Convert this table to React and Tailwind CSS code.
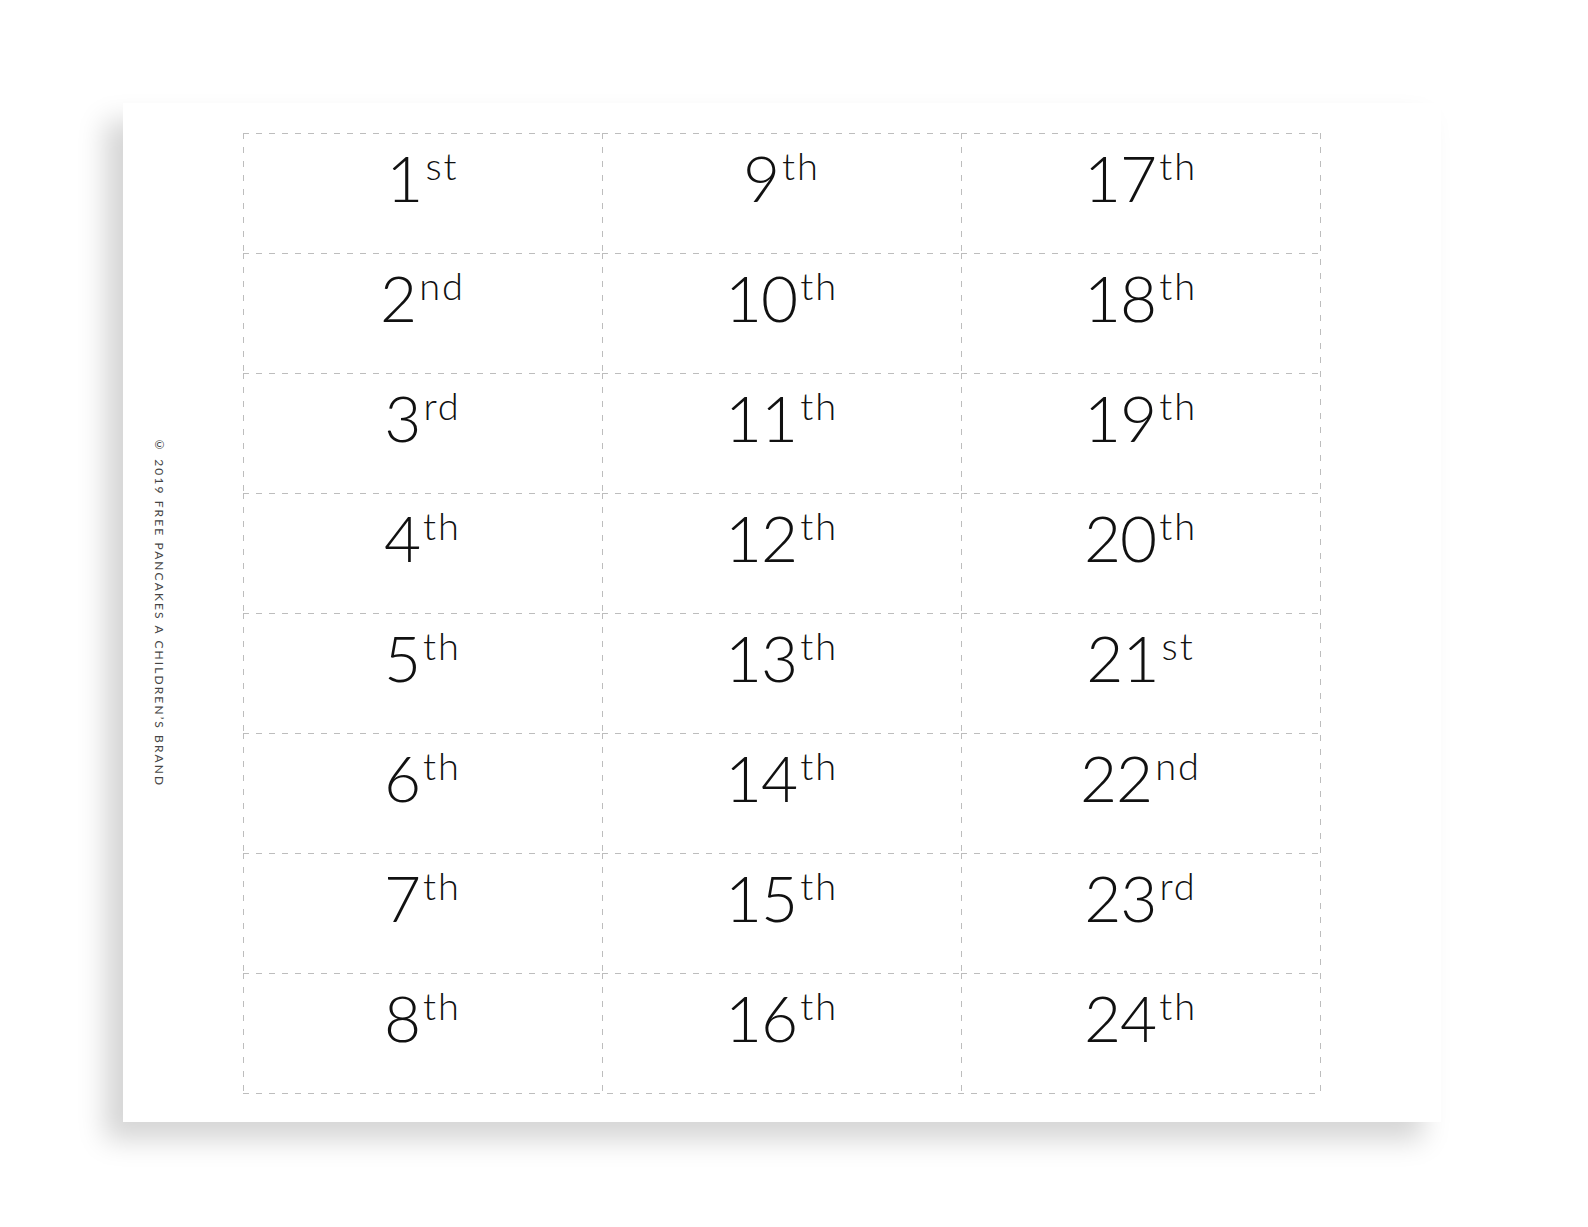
const suffix = (n) => {
  if (n % 100 >= 11 && n % 100 <= 13) return 'th'
  if (n % 10 === 1) return 'st'
  if (n % 10 === 2) return 'nd'
  if (n % 10 === 3) return 'rd'
  return 'th'
}

// row-major order: each row holds n, n + 8, n + 16
const cells = []
for (let r = 1; r <= 8; r++) {
  cells.push(r, r + 8, r + 16)
}

function Cell({ n }) {
  return (
    <div className="h-[120px] flex justify-center pt-[13px] [background:linear-gradient(to_right,#bdbdbd_6px,transparent_6px)_left_top/13px_1px_repeat-x,linear-gradient(to_bottom,#bdbdbd_6px,transparent_6px)_left_top/1px_14px_repeat-y]">
      <span className="text-[64px] leading-[64px] font-light tracking-[-1px] text-[#111]">
        {n}
        <span className="text-[38px] leading-none align-[22px] ml-[3px] tracking-[2px]">{suffix(n)}</span>
      </span>
    </div>
  )
}

export default function App() {
  return (
    <div className="min-h-[1227px] bg-white pt-[103px] pl-[123px] font-['Lato','Liberation_Sans',sans-serif]">
      <div className="w-[1318px] h-[1019px] bg-white flex shadow-[-18px_18px_26px_rgba(0,0,0,0.17)]">
        <div className="w-[120px] flex items-center pl-[27px]">
          <span className="[writing-mode:vertical-rl] text-[12px] tracking-[2.1px] text-[#444] whitespace-nowrap">
            © 2019 FREE PANCAKES A CHILDREN’S BRAND
          </span>
        </div>
        <div className="pt-[30px]">
          <div className="w-[1078px] grid grid-cols-3 [background:linear-gradient(to_right,#bdbdbd_6px,transparent_6px)_left_bottom/13px_1px_repeat-x,linear-gradient(to_bottom,#bdbdbd_6px,transparent_6px)_right_top/1px_14px_repeat-y] pb-px pr-px">
            {cells.map((n) => (
              <Cell key={n} n={n} />
            ))}
          </div>
        </div>
      </div>
    </div>
  )
}
